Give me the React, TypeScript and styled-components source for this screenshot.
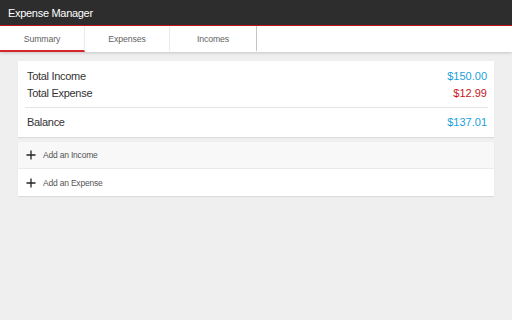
import React from 'react';
import styled, { createGlobalStyle } from 'styled-components';

const GlobalStyle = createGlobalStyle`
    html, body {
        margin: 0;
        padding: 0;
        background: #efefef;
        font-family: "Liberation Sans", Arial, sans-serif;
    }
`;

const Page = styled.div`
    width: 512px;
    height: 320px;
    background: #efefef;
    overflow: hidden;
`;

const TitleBar = styled.div`
    height: 25px;
    background: #2d2d2d;
    border-bottom: 1px solid #c8161d;
    color: #fff;
    font-size: 11px;
    letter-spacing: -0.3px;
    line-height: 26px;
    padding-left: 8px;
`;

const TabBar = styled.div`
    display: flex;
    height: 26px;
    background: #fff;
    box-shadow: 0 1px 3px rgba(0, 0, 0, 0.18);
`;

const Tab = styled.div<{ active?: boolean }>`
    width: 85px;
    box-sizing: border-box;
    border-right: 1px solid #ebebeb;
    border-bottom: 2px solid ${p => p.active ? '#d4262b' : 'transparent'};
    color: #5f5f5f;
    font-size: 8.7px;
    letter-spacing: -0.1px;
    text-align: center;
    line-height: 26px;
    &:last-child {
        width: 87px;
        border-right: 1px solid #c4c4c4;
    }
`;

const Content = styled.div`
    padding: 9px 18px 0;
    display: flex;
    flex-direction: column;
`;

const Card = styled.div`
    background: #fff;
    box-shadow: 0 1px 1px rgba(0, 0, 0, 0.08);
    padding: 7px 6px 6px 7px;
    margin-bottom: 5px;
`;

const Row = styled.div`
    display: flex;
    justify-content: space-between;
    font-size: 11px;
    letter-spacing: -0.3px;
    color: #333;
    line-height: 17px;
    padding: 0 1px 0 2px;
`;

const Amount = styled.span<{ tone: 'blue' | 'red' }>`
    letter-spacing: 0;
    color: ${p => p.tone === 'blue' ? '#1a9fd8' : '#c8161d'};
`;

const Divider = styled.div`
    height: 1px;
    background: #e4e4e4;
    margin: 5px 0 6px;
`;

const ActionList = styled.div`
    display: flex;
    flex-direction: column;
    box-shadow: 0 1px 1px rgba(0, 0, 0, 0.08);
`;

const Action = styled.div<{ shaded?: boolean }>`
    display: flex;
    align-items: center;
    height: 26px;
    padding-left: 8px;
    background: ${p => p.shaded ? '#f8f8f8' : '#fff'};
    border-bottom: 1px solid #eaeaea;
    color: #555;
    font-size: 8.5px;
    letter-spacing: -0.2px;
    &:last-child {
        border-bottom: none;
        height: 27px;
    }
`;

const PlusIcon = styled.svg`
    width: 10px;
    height: 10px;
    margin-right: 7px;
`;

const Plus = () => (
    <PlusIcon viewBox="0 0 10 10">
        <path d="M5 0.5v9M0.5 5h9" stroke="#222" strokeWidth="1.3" fill="none" />
    </PlusIcon>
);

export default function App() {
    return <Page>
        <GlobalStyle />
        <TitleBar>Expense Manager</TitleBar>
        <TabBar>
            <Tab active>Summary</Tab>
            <Tab>Expenses</Tab>
            <Tab>Incomes</Tab>
        </TabBar>
        <Content>
            <Card>
                <Row><span>Total Income</span><Amount tone="blue">$150.00</Amount></Row>
                <Row><span>Total Expense</span><Amount tone="red">$12.99</Amount></Row>
                <Divider />
                <Row><span>Balance</span><Amount tone="blue">$137.01</Amount></Row>
            </Card>
            <ActionList>
                <Action shaded><Plus />Add an Income</Action>
                <Action><Plus />Add an Expense</Action>
            </ActionList>
        </Content>
    </Page>;
}
